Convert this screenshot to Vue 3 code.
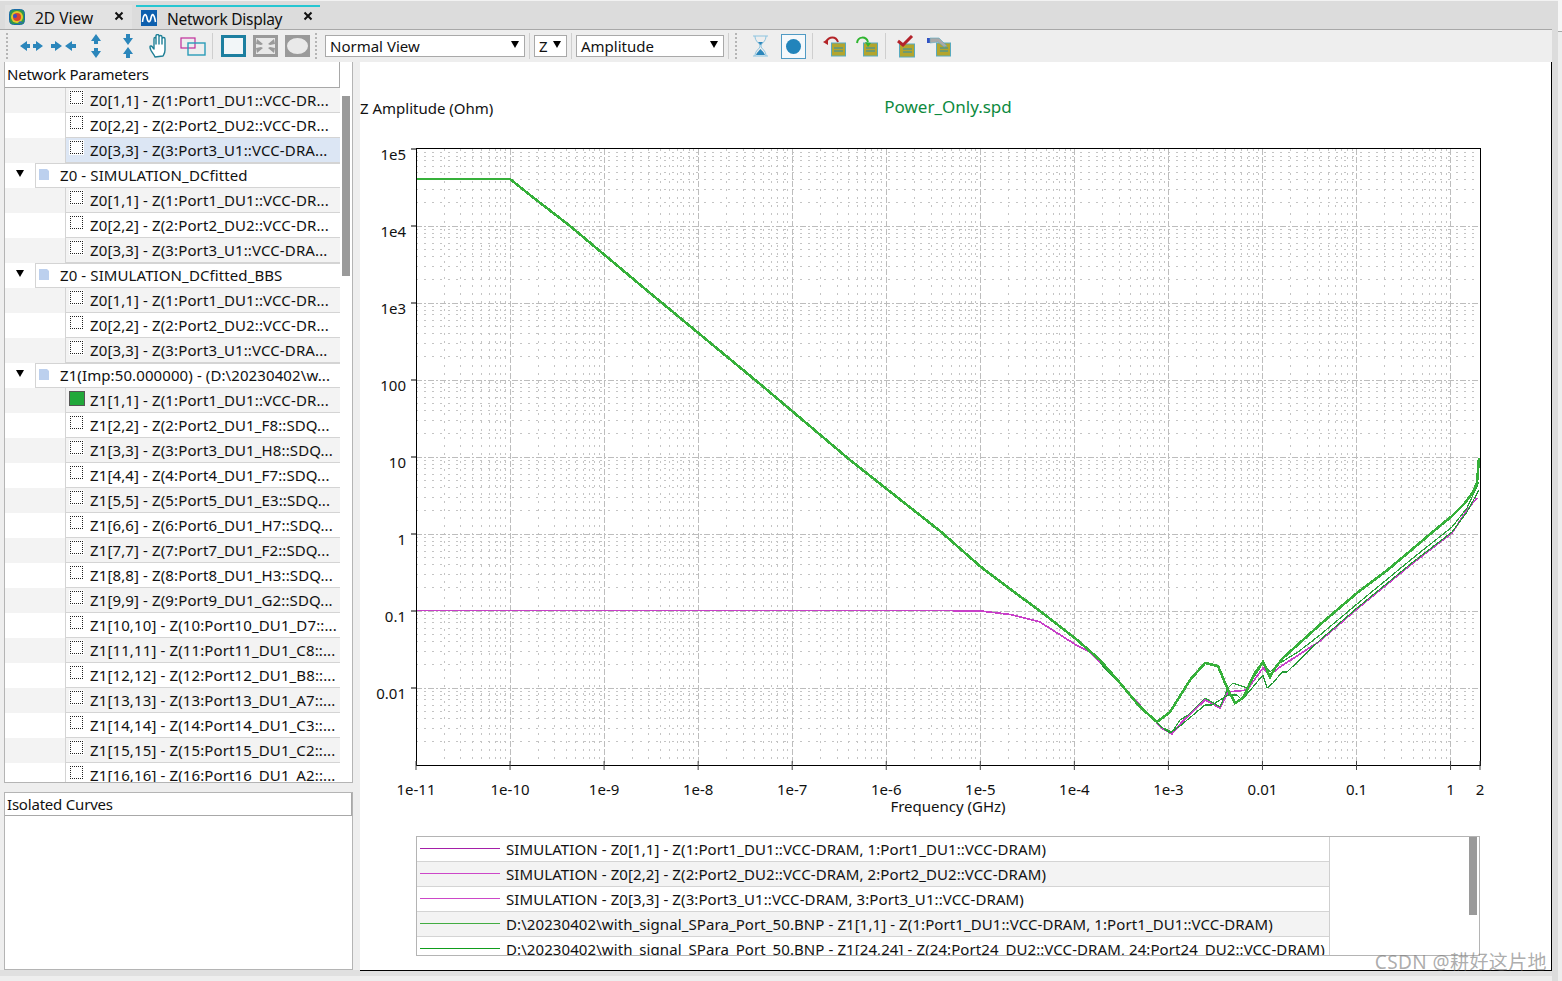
<script setup>
const T = (t) => ({ type: 'child', text: t })
const G = (t) => ({ type: 'group', text: t })
const z0 = [
  'Z0[1,1] - Z(1:Port1_DU1::VCC-DR...',
  'Z0[2,2] - Z(2:Port2_DU2::VCC-DR...',
  'Z0[3,3] - Z(3:Port3_U1::VCC-DRA...'
]
const rows = [
  ...z0.map(T),
  G('Z0 - SIMULATION_DCfitted'),
  ...z0.map(T),
  G('Z0 - SIMULATION_DCfitted_BBS'),
  ...z0.map(T),
  G('Z1(Imp:50.000000) - (D:\\20230402\\w...'),
  ...[
    'Z1[1,1] - Z(1:Port1_DU1::VCC-DR...',
    'Z1[2,2] - Z(2:Port2_DU1_F8::SDQ...',
    'Z1[3,3] - Z(3:Port3_DU1_H8::SDQ...',
    'Z1[4,4] - Z(4:Port4_DU1_F7::SDQ...',
    'Z1[5,5] - Z(5:Port5_DU1_E3::SDQ...',
    'Z1[6,6] - Z(6:Port6_DU1_H7::SDQ...',
    'Z1[7,7] - Z(7:Port7_DU1_F2::SDQ...',
    'Z1[8,8] - Z(8:Port8_DU1_H3::SDQ...',
    'Z1[9,9] - Z(9:Port9_DU1_G2::SDQ...',
    'Z1[10,10] - Z(10:Port10_DU1_D7::...',
    'Z1[11,11] - Z(11:Port11_DU1_C8::...',
    'Z1[12,12] - Z(12:Port12_DU1_B8::...',
    'Z1[13,13] - Z(13:Port13_DU1_A7::...',
    'Z1[14,14] - Z(14:Port14_DU1_C3::...',
    'Z1[15,15] - Z(15:Port15_DU1_C2::...',
    'Z1[16,16] - Z(16:Port16_DU1_A2::...'
  ].map(T)
].map((r, i) => ({ ...r, alt: i % 2 === 0, selected: i === 2, on: i === 12 }))

const X0 = 416, DX = 94.05, Y0 = 149, DY = 77
const xOf = (e) => X0 + DX * (e + 11)
const yOf = (e) => Y0 + DY * (5 - e)
const logs = [2, 3, 4, 5, 6, 7, 8, 9].map(Math.log10)

const minorV = []
for (let d = -11; d < 0; d++) for (const l of logs) if (xOf(d + l) < 1480) minorV.push(xOf(d + l))
const minorH = []
for (let d = -3; d < 5; d++) for (const l of logs) minorH.push(yOf(d + l))
const majorV = Array.from({ length: 11 }, (_, i) => xOf(i - 10))
const majorH = Array.from({ length: 8 }, (_, i) => yOf(4 - i))

const xLabels = [
  ['1e-11', xOf(-11)], ['1e-10', xOf(-10)], ['1e-9', xOf(-9)], ['1e-8', xOf(-8)], ['1e-7', xOf(-7)],
  ['1e-6', xOf(-6)], ['1e-5', xOf(-5)], ['1e-4', xOf(-4)], ['1e-3', xOf(-3)], ['0.01', xOf(-2)],
  ['0.1', xOf(-1)], ['1', xOf(0)], ['2', 1480]
]
const yLabels = ['1e5', '1e4', '1e3', '100', '10', '1', '0.1', '0.01'].map((t, i) => [t, Y0 + DY * i])

const P = (a) => a.map((p) => p.join(',')).join(' ')
const thick = P([[416, 179], [510, 179], [530, 195], [570, 226], [650, 293], [760, 384], [850, 460], [940, 531], [981, 567], [1010, 589], [1040, 611], [1076, 639], [1100, 660], [1120, 683], [1140, 707], [1157, 722], [1170, 712], [1190, 680], [1205, 663], [1218, 666], [1228, 690], [1235, 703], [1243, 698], [1255, 673], [1263, 662], [1270, 677], [1275, 668], [1283, 658], [1323, 622], [1357, 593], [1390, 568], [1435, 530], [1452, 516], [1465, 503], [1473, 492], [1477, 483], [1479, 458]])
const thin1 = P([[1100, 661], [1130, 695], [1163, 728], [1172, 732], [1180, 720], [1188, 715], [1205, 698], [1220, 707], [1228, 688], [1233, 683], [1247, 688], [1263, 663], [1270, 672], [1280, 663], [1298, 652], [1320, 635], [1357, 604], [1413, 558], [1452, 527], [1467, 508], [1479, 482]])
const thin2 = P([[1100, 663], [1135, 700], [1160, 726], [1170, 733], [1180, 726], [1205, 705], [1212, 705], [1228, 695], [1237, 695], [1242, 700], [1263, 675], [1267, 688], [1273, 683], [1282, 672], [1287, 672], [1320, 640], [1357, 608], [1413, 562], [1452, 532], [1467, 512], [1479, 490]])
const magenta = P([[416, 610.5], [940, 610.5], [981, 611], [1010, 614.5], [1040, 622], [1076, 645], [1090, 652], [1100, 662], [1135, 700], [1163, 729], [1172, 734], [1182, 722], [1205, 700], [1220, 708], [1228, 692], [1247, 690], [1263, 668], [1270, 675], [1280, 667], [1320, 641], [1357, 609], [1413, 563], [1452, 533], [1467, 510], [1477, 498]])

const legend = [
  ['#a41fa8', 'SIMULATION - Z0[1,1] - Z(1:Port1_DU1::VCC-DRAM, 1:Port1_DU1::VCC-DRAM)'],
  ['#cc47c8', 'SIMULATION - Z0[2,2] - Z(2:Port2_DU2::VCC-DRAM, 2:Port2_DU2::VCC-DRAM)'],
  ['#cc47c8', 'SIMULATION - Z0[3,3] - Z(3:Port3_U1::VCC-DRAM, 3:Port3_U1::VCC-DRAM)'],
  ['#42ad42', 'D:\\20230402\\with_signal_SPara_Port_50.BNP - Z1[1,1] - Z(1:Port1_DU1::VCC-DRAM, 1:Port1_DU1::VCC-DRAM)'],
  ['#0f9d1c', 'D:\\20230402\\with_signal_SPara_Port_50.BNP - Z1[24,24] - Z(24:Port24_DU2::VCC-DRAM, 24:Port24_DU2::VCC-DRAM)']
]
</script>

<template>
  <div class="app">
    <div class="body">
      <div class="tabbar">
        <div class="tab first">
          <svg class="tabicon" width="16" height="16" viewBox="0 0 16 16">
            <rect x="0.5" y="0.5" width="15" height="15" rx="4" fill="#2f9a4a" stroke="#1b6aa8" />
            <circle cx="8" cy="8" r="6" fill="#e3c52b" />
            <circle cx="8" cy="8" r="4" fill="#d9432f" />
            <circle cx="6" cy="7" r="2" fill="#3a4fc0" />
            <path d="M11 12l3 2H9z" fill="#2c64c8" />
          </svg>
          <span class="tablabel">2D View</span>
          <svg class="close" width="10" height="10" viewBox="0 0 10 10"><path d="M1.5 1.5l7 7M8.5 1.5l-7 7" stroke="#111" stroke-width="2" /></svg>
        </div>
        <div class="tab active">
          <svg class="tabicon" width="16" height="16" viewBox="0 0 16 16">
            <rect width="16" height="16" fill="#0d5fae" />
            <path d="M1.5 12C2.5 3 5 3 6 8s3 5 4 0 3-5 4.5 4" fill="none" stroke="#fff" stroke-width="1.6" />
          </svg>
          <span class="tablabel net">Network Display</span>
          <svg class="close" width="10" height="10" viewBox="0 0 10 10"><path d="M1.5 1.5l7 7M8.5 1.5l-7 7" stroke="#111" stroke-width="2" /></svg>
        </div>
      </div>

      <div class="toolbar">
        <span class="grip g1"></span>
        <svg class="ic" style="margin-left:12px" width="23" height="12" viewBox="0 0 23 12"><path d="M0 6l7-5v3h3v4H7v3zM23 6l-7-5v3h-3v4h3v3z" fill="#2b86bb" /></svg>
        <svg class="ic" style="margin-left:8px" width="25" height="12" viewBox="0 0 25 12"><path d="M11 6L4 1v3H0v4h4v3zM14 6l7-5v3h4v4h-4v3z" fill="#2b86bb" /></svg>
        <svg class="ic" style="margin-left:14px" width="12" height="24" viewBox="0 0 12 24"><path d="M6 0l5 7H8v3H4V7H1zM6 24l5-7H8v-3H4v3H1z" fill="#2b86bb" /></svg>
        <svg class="ic" style="margin-left:20px" width="12" height="24" viewBox="0 0 12 24"><path d="M6 11l5-7H8V0H4v4H1zM6 13l5 7H8v4H4v-4H1z" fill="#2b86bb" /></svg>
        <svg class="ic" style="margin-left:15px" width="22" height="24" viewBox="0 0 22 24"><path d="M6 23c-1-3-5-6-5-10 0-2 2-1 3 1l1 1V5c0-2 2-2 2 0v5-8c0-2 3-2 3 0v8-7c0-2 3-2 3 0v7-5c0-2 3-2 3 0v11c0 3-1 4-2 6z" fill="#fff" stroke="#1f7f96" stroke-width="1.4" stroke-linejoin="round" /></svg>
        <svg class="ic" style="margin-left:9px" width="26" height="19" viewBox="0 0 26 19"><rect x="1" y="1" width="14" height="10" fill="none" stroke="#c02d9b" stroke-width="1.2" /><rect x="8" y="6" width="17" height="12" fill="none" stroke="#2a9cb8" stroke-width="1.4" /></svg>
        <span class="sep" style="margin-left:6px"></span>
        <svg class="ic" style="margin-left:8px" width="25" height="22" viewBox="0 0 25 22"><rect x="1.5" y="1.5" width="22" height="19" fill="#f2f6f8" stroke="#1d7fa0" stroke-width="3" /></svg>
        <svg class="ic" style="margin-left:7px" width="25" height="22" viewBox="0 0 25 22"><rect x="1.5" y="1.5" width="22" height="19" fill="#e8e8e8" stroke="#9a9a9a" stroke-width="3" /><path d="M4 4l6 5-2 1-5-1zM21 4l-6 5 2 1 5-1zM4 18l6-5-2-1-5 1zM21 18l-6-5 2-1 5 1z" fill="#9a9a9a" /></svg>
        <svg class="ic" style="margin-left:7px" width="25" height="22" viewBox="0 0 25 22"><rect x="0" y="0" width="25" height="22" fill="#9a9a9a" /><ellipse cx="12.5" cy="11" rx="10.5" ry="8" fill="#e9e9e9" /></svg>
        <span class="grip" style="margin-left:5px"></span>
        <div class="combo" style="margin-left:8px;width:200px"><span>Normal View</span><i></i></div>
        <span class="sep" style="margin-left:4px"></span>
        <div class="combo" style="margin-left:4px;width:33px"><span>Z</span><i></i></div>
        <span class="sep" style="margin-left:4px"></span>
        <div class="combo" style="margin-left:4px;width:148px"><span>Amplitude</span><i></i></div>
        <span class="sep" style="margin-left:4px"></span>
        <span class="grip" style="margin-left:6px"></span>
        <svg class="ic" style="margin-left:15px" width="18" height="22" viewBox="0 0 18 22"><path d="M1 1h15M1 21h15M3 1c0 6 5 7 5 10S3 15 3 21M14 1c0 6-5 7-5 10s5 4 5 10" fill="none" stroke="#8cc4e0" stroke-width="1" /><path d="M4 20c1-3 3-4 4.500-6 1.500 2 3.500 3 4.500 6zM6 7h5l-2.500 3z" fill="#2b86bb" /></svg>
        <div class="btnOn"><svg width="21" height="21" viewBox="0 0 21 21"><circle cx="10.5" cy="10.5" r="7.5" fill="#2284bb" /></svg></div>
        <span class="sep" style="margin-left:6px"></span>
        <svg class="ic" style="margin-left:10px" width="24" height="22" viewBox="0 0 24 22"><rect x="8.5" y="8" width="14" height="13" fill="#b3a52d" stroke="#58aabf" /><path d="M11 13h9M11 16h9" stroke="#2a8fb2" /><path d="M3 7C6 1 13 1 15 7" fill="none" stroke="#b32327" stroke-width="2" /><path d="M0 7l5-3v6z" fill="#b32327" /></svg>
        <svg class="ic" style="margin-left:8px" width="24" height="22" viewBox="0 0 24 22"><rect x="8.5" y="8" width="14" height="13" fill="#b3a52d" stroke="#58aabf" /><path d="M11 13h9M11 16h9" stroke="#2a8fb2" /><path d="M2 8C3 1 11 1 13 7" fill="none" stroke="#2fb52f" stroke-width="2" /><path d="M16 8l-6-1 3 5z" fill="#2fb52f" /></svg>
        <span class="sep" style="margin-left:6px"></span>
        <svg class="ic" style="margin-left:11px" width="20" height="23" viewBox="0 0 20 23"><rect x="2.5" y="9" width="15" height="13" fill="#b3a52d" stroke="#58aabf" /><path d="M6 14h9M6 17h9" stroke="#2a8fb2" /><path d="M1 6l5 4L15 1" fill="none" stroke="#b3222a" stroke-width="3" /></svg>
        <svg class="ic" style="margin-left:10px" width="24" height="21" viewBox="0 0 24 21"><rect x="9.5" y="7" width="14" height="13" fill="#b3a52d" stroke="#58aabf" /><path d="M13 12h8M13 15h8" stroke="#2a8fb2" /><rect x="0" y="2" width="3" height="5" fill="#3251c4" /><path d="M3 2h9l8 8-3 1-6-5-8 1z" fill="#a9a9a9" stroke="#58aabf" stroke-width=".6" /></svg>
      </div>

      <div class="main">
        <aside class="left">
          <div class="treebox">
            <div class="tree">
              <div class="hdr">Network Parameters</div>
              <div
                v-for="(r, i) in rows"
                :key="i"
                class="row"
                :class="[r.type, { alt: r.alt, selected: r.selected }]"
              >
                <template v-if="r.type === 'group'">
                  <span class="gutter g"><i class="tri"></i></span>
                  <span class="cell">
                    <svg class="gicon" width="12" height="13" viewBox="0 0 12 13"><path d="M1 1h8l2 2v9H1z" fill="#bcd0ee" /></svg>
                    <span class="t">{{ r.text }}</span>
                  </span>
                </template>
                <template v-else>
                  <span class="gutter"></span>
                  <span class="cell">
                    <i v-if="r.on" class="swatch"></i>
                    <i v-else class="check"></i>
                    <span class="t">{{ r.text }}</span>
                  </span>
                </template>
              </div>
            </div>
            <div class="vbar"><div class="thumb"></div></div>
          </div>
          <div class="isolated">
            <div class="isohdr">Isolated Curves</div>
          </div>
        </aside>

        <section class="plot">
          <svg class="chart" width="1191" height="760" viewBox="360 62 1191 760">
            <g class="minor">
              <line v-for="x in minorV" :key="'v' + x" :x1="x" :x2="x" y1="149" y2="765" />
              <line v-for="y in minorH" :key="'h' + y" x1="416" x2="1480" :y1="y" :y2="y" />
            </g>
            <g class="majorv">
              <line v-for="x in majorV" :key="'V' + x" :x1="x" :x2="x" y1="149" y2="765" />
            </g>
            <g class="majorh">
              <line v-for="y in majorH" :key="'H' + y" x1="416" x2="1480" :y1="y" :y2="y" />
            </g>
            <polyline class="curve" :points="magenta" stroke="#c83fc8" stroke-width="1.7" />
            <polyline class="curve" :points="thin2" stroke="#239a35" stroke-width="1.2" />
            <polyline class="curve" :points="thin1" stroke="#2aa33a" stroke-width="1.2" />
            <polyline class="curve" :points="thick" stroke="#36b03a" stroke-width="2.6" />
            <rect x="416.5" y="148.5" width="1064" height="617" fill="none" stroke="#000" />
            <line v-for="t in xLabels" :key="t[0]" :x1="t[1]" :x2="t[1]" y1="761" y2="770" stroke="#444" />
            <line v-for="t in yLabels" :key="'y' + t[0]" x1="411" x2="416" :y1="t[1]" :y2="t[1]" stroke="#000" />
            <text class="lab" x="360" y="114">Z Amplitude (Ohm)</text>
            <text class="title" x="948" y="113" text-anchor="middle">Power_Only.spd</text>
            <text v-for="t in xLabels" :key="'t' + t[0]" class="lab" :x="t[1]" y="795" text-anchor="middle">{{ t[0] }}</text>
            <text v-for="t in yLabels" :key="'l' + t[0]" class="lab" x="406" :y="t[1] + 11" text-anchor="end">{{ t[0] }}</text>
            <text class="lab" x="948" y="812" text-anchor="middle">Frequency (GHz)</text>
          </svg>
          <div class="legend">
            <div class="ltable">
              <div v-for="(l, i) in legend" :key="i" class="lrow" :class="{ lalt: i % 2 === 1 }">
                <span class="lline" :style="{ background: l[0] }"></span>
                <span class="ltext">{{ l[1] }}</span>
              </div>
            </div>
            <div class="lthumb"></div>
          </div>
          <div class="mark">CSDN @耕好这片地</div>
        </section>
      </div>
      <div class="bottom"></div>
    </div>
    <div class="edge"></div>
  </div>
</template>

<style scoped>
.app {
  width: 1562px;
  height: 981px;
  overflow: hidden;
  font-family: "Noto Sans", "Noto Sans CJK SC", sans-serif;
  font-size: 15px;
  color: #111;
  display: flex;
}
.body {
  flex: none;
  width: 1558px;
  display: flex;
  flex-direction: column;
  background: #dcdcdc;
}
.edge {
  flex: 1;
  background: linear-gradient(to bottom, #f6f6f6 0 31px, #a8a8a8 31px 32px, #eeeeee 32px);
}
.tabbar {
  height: 29px;
  flex: none;
  box-sizing: border-box;
  background: #dcdcdc;
  border-top: 1px solid #f2f2f2;
  display: flex;
  padding-left: 5px;
  gap: 4px;
  align-items: flex-end;
}
.tab {
  height: 24px;
  box-sizing: border-box;
  display: flex;
  align-items: center;
  position: relative;
}
.tab.first { width: 127px; background: #e2e2e2; padding-left: 4px; }
.tab.active { width: 184px; background: #dcdcdc; border-top: 2px solid #26c6d2; padding-left: 5px; }
.tablabel { margin-left: 10px; font-size: 15.5px; position: relative; top: 1px; }
.tablabel.net { letter-spacing: -0.27px; }
.close { position: absolute; top: 6px; right: 8px; }
.tab.active .close { right: 7px; top: 4px; }
.toolbar {
  height: 33px;
  flex: none;
  box-sizing: border-box;
  margin-right: 6px;
  background: #eeeeee;
  border-top: 1px solid #a8a8a8;
  display: flex;
  align-items: center;
  padding-left: 6px;
}
.ic { flex: none; }
.grip {
  flex: none;
  width: 2px;
  height: 26px;
  background: repeating-linear-gradient(to bottom, #b5b5b5 0 2px, transparent 2px 4px);
}
.sep { flex: none; width: 1px; height: 26px; background: #cfcfcf; }
.combo {
  flex: none;
  box-sizing: border-box;
  height: 22px;
  background: #fff;
  border: 1px solid #a9a9a9;
  display: flex;
  align-items: center;
  justify-content: space-between;
  padding: 0 5px 0 4px;
  font-size: 15px;
}
.combo i {
  width: 0;
  height: 0;
  border-left: 4px solid transparent;
  border-right: 4px solid transparent;
  border-top: 7px solid #000;
  margin-bottom: 4px;
}
.btnOn {
  flex: none;
  margin-left: 11px;
  width: 25px;
  height: 25px;
  box-sizing: border-box;
  border: 1px solid #4f9ac4;
  background: #f4f8fb;
  display: flex;
  align-items: center;
  justify-content: center;
}
.main { display: flex; height: 908px; flex: none; }
.left {
  flex: none;
  width: 360px;
  box-sizing: border-box;
  background: #eeeeee;
  padding: 0 7px 0 4px;
  display: flex;
  flex-direction: column;
}
.treebox {
  height: 721px;
  flex: none;
  display: flex;
  overflow: hidden;
  background: #fff;
  border-left: 1px solid #b4b4b4;
  border-right: 1px solid #b4b4b4;
  border-bottom: 1px solid #b4b4b4;
  box-sizing: border-box;
}
.tree { width: 335px; flex: none; overflow: hidden; }
.hdr {
  height: 26px;
  box-sizing: border-box;
  line-height: 25px;
  padding-left: 2px;
  letter-spacing: -0.22px;
  background: #fff;
  border-right: 1px solid #a8a8a8;
  border-bottom: 1px solid #a8a8a8;
}
.row { height: 25px; display: flex; background: #fff; }
.gutter { flex: none; width: 60px; background: #fff; }
.row.alt .gutter { background: #f3f3f3; }
.gutter.g { width: 30px; display: flex; padding-top: 7px; box-sizing: border-box; padding-left: 11px; }
.row.group .gutter { background: #fff; }
.tri {
  width: 0;
  height: 0;
  border-left: 4.5px solid transparent;
  border-right: 4.5px solid transparent;
  border-top: 7px solid #000;
}
.cell {
  flex: 1;
  box-sizing: border-box;
  display: flex;
  align-items: center;
  border-left: 1px solid #d4d4d4;
  border-bottom: 1px solid #d4d4d4;
  padding-left: 3px;
  min-width: 0;
  white-space: nowrap;
  overflow: hidden;
}
.row.alt .cell { background: #f3f3f3; }
.row.selected .cell { background: #dce6f4; }
.row.group .cell { padding: 0 0 2px 2px; border-top: 1px solid #d4d4d4; background: #fff; }
.gicon { flex: none; margin-right: 10px; margin-top: 0; }
.check {
  flex: none;
  width: 13px;
  height: 13px;
  box-sizing: border-box;
  background: #fff;
  border: 1px dotted #222;
  outline: 1px solid #fff;
  margin: -5px 7px 0 1px;
}
.swatch {
  flex: none;
  width: 16px;
  height: 15px;
  box-sizing: border-box;
  background: #21a83a;
  border: 1px solid #555;
  margin: -4px 5px 0 0;
}
.t { letter-spacing: 0.12px; }
.row.group .t { letter-spacing: 0.1px; }
.vbar { flex: 1; background: #fff; padding: 34px 2px 0 2px; }
.thumb { width: 8px; height: 180px; background: #9a9a9a; }
.isolated {
  margin-top: 9px;
  height: 178px;
  flex: none;
  box-sizing: border-box;
  background: #fff;
  border: 1px solid #b4b4b4;
}
.isohdr {
  height: 23px;
  box-sizing: border-box;
  line-height: 23px;
  padding-left: 2px;
  letter-spacing: -0.2px;
  border-right: 1px solid #a8a8a8;
  border-bottom: 1px solid #a8a8a8;
}
.plot {
  flex: none;
  width: 1192px;
  box-sizing: border-box;
  position: relative;
  background: #fff;
  border-right: 1px solid #000;
  border-bottom: 1px solid #000;
  height: 909px;
}
.chart { display: block; }
.minor line { stroke: #c4c4c4; stroke-width: 1; stroke-dasharray: 2 6; shape-rendering: crispEdges; }
.majorv line { stroke: #bdbdbd; stroke-width: 1; stroke-dasharray: 6 2; shape-rendering: crispEdges; }
.majorh line { stroke: #bdbdbd; stroke-width: 1; stroke-dasharray: 6 2 2 2; shape-rendering: crispEdges; }
.curve { fill: none; shape-rendering: crispEdges; }
.lab { font-size: 15px; fill: #111; }
.title { font-size: 17px; fill: #0c8a3e; }
.legend {
  position: relative;
  margin: 14px 0 0 56px;
  width: 1064px;
  height: 120px;
  box-sizing: border-box;
  border: 1px solid #b4b4b4;
  overflow: hidden;
}
.ltable { width: 913px; border-right: 1px solid #cfcfcf; box-sizing: border-box; }
.lrow {
  height: 25px;
  box-sizing: border-box;
  display: flex;
  align-items: center;
  border-bottom: 1px solid #d4d4d4;
  white-space: nowrap;
}
.lalt { background: #f3f3f3; }
.lline { flex: none; width: 80px; height: 1px; margin: -2px 0 0 3px; }
.ltext { margin-left: 6px; letter-spacing: 0.09px; }
.lthumb { position: absolute; top: 0; right: 2px; width: 8px; height: 78px; background: #9a9a9a; }
.mark {
  position: absolute;
  right: 4px;
  bottom: -4px;
  font-size: 19px;
  line-height: 24px;
  letter-spacing: 0.4px;
  color: rgba(120, 120, 120, 0.62);
  white-space: nowrap;
}
.bottom { flex: 1; background: linear-gradient(to bottom, #e0e0e0 0 6px, #eeeeee 6px); margin-right: 6px; }
</style>

<style>
html, body { margin: 0; background: #dcdcdc; }
</style>
